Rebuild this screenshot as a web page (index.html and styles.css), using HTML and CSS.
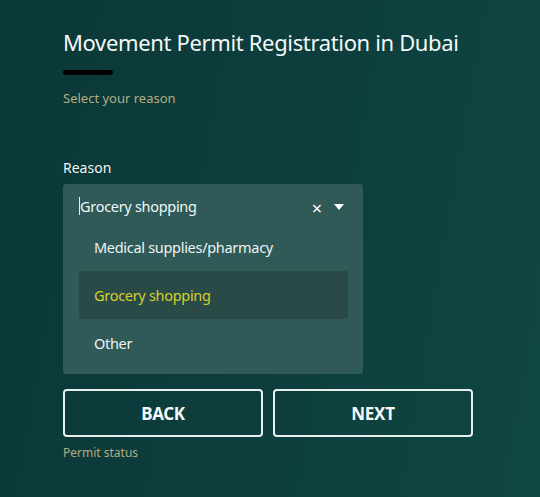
FILE: index.html
```html
<!DOCTYPE html>
<html>
<head>
<meta charset="utf-8">
<link rel="stylesheet" href="styles.css">
</head>
<body>
<main class="page">
  <h1 class="title">Movement Permit Registration in Dubai</h1>
  <div class="rule"></div>
  <p class="subtitle">Select your reason</p>
  <label class="label">Reason</label>
  <div class="select">
    <div class="control">
      <span class="value"><span class="caret"></span>Grocery shopping</span>
      <span class="clear">&times;</span>
      <svg class="arrow" width="10" height="6" viewBox="0 0 10 6"><path d="M0 0h10L5 6z" fill="#fff"/></svg>
    </div>
    <ul class="menu">
      <li class="option">Medical supplies/pharmacy</li>
      <li class="option active">Grocery shopping</li>
      <li class="option">Other</li>
    </ul>
  </div>
  <div class="buttons">
    <button class="btn">BACK</button>
    <button class="btn">NEXT</button>
  </div>
  <a class="status">Permit status</a>
</main>
</body>
</html>
```
FILE: styles.css
```css
* { box-sizing: border-box; }
html, body { margin: 0; height: 100%; }
body {
  background: linear-gradient(100deg, #0b3838 0%, #0d3e3d 55%, #0f4742 100%);
  font-family: "Noto Sans", "Open Sans", sans-serif;
  color: #f2f6f6;
}
.page {
  padding: 26px 0 0 63px;
  display: flex;
  flex-direction: column;
  align-items: flex-start;
}
.title {
  margin: 0;
  font-weight: 400;
  font-size: 22px;
  line-height: 32px;
  letter-spacing: -0.35px;
  color: #f4f8f8;
}
.rule {
  margin-top: 12px;
  width: 50px;
  height: 5px;
  background: #000;
  border-radius: 3px;
}
.subtitle {
  margin: 14px 0 0;
  font-size: 13px;
  line-height: 18px;
  color: #b4ad80;
}
.label {
  margin-top: 52px;
  font-size: 14px;
  line-height: 18px;
  color: #f2f6f6;
}
.select {
  margin-top: 7px;
  width: 300px;
  background: #2f5a57;
  border-radius: 3px;
  padding: 0 15px 7px 16px;
}
.control {
  height: 39px;
  display: flex;
  align-items: center;
  padding-top: 5px;
}
.value {
  flex: 1;
  font-size: 14.5px;
  letter-spacing: -0.3px;
  color: #f2f6f6;
  display: flex;
  align-items: center;
}
.caret {
  width: 1px;
  height: 18px;
  background: #e8eeee;
}
.clear {
  font-size: 18px;
  line-height: 1;
  color: #fff;
  margin-right: 12px;
  margin-top: 4px;
}
.arrow { margin-right: 4px; margin-top: 2px; }
.menu {
  list-style: none;
  margin: 0;
  padding: 0;
}
.option {
  height: 48px;
  display: flex;
  align-items: center;
  padding-left: 15px;
  font-size: 14.5px;
  letter-spacing: -0.3px;
  color: #eef3f3;
}
.option.active {
  background: #2a4a48;
  color: #d6cf2c;
}
.buttons {
  margin-top: 15px;
  display: flex;
  gap: 10px;
}
.btn {
  width: 200px;
  height: 48px;
  background: transparent;
  border: 2px solid #e8eeee;
  border-radius: 4px;
  color: #f4f8f8;
  font-family: "Noto Sans", sans-serif;
  font-weight: 700;
  font-size: 17px;
  letter-spacing: -0.3px;
}
.status {
  margin-top: 8px;
  font-size: 12px;
  line-height: 16px;
  color: #b4ad80;
}
```
